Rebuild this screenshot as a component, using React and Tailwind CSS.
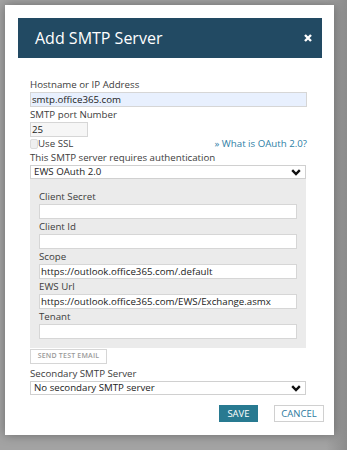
const Chevron = () => (
  <svg width="10" height="7" viewBox="0 0 10 7" className="mr-[4px]">
    <polyline points="1.2,1.2 5,5 8.8,1.2" fill="none" stroke="#111" strokeWidth="2.4" />
  </svg>
);

const Label = ({ children }) => (
  <div className="h-[15px] leading-[15px] text-[9.7px] text-[#3c3c3c]">{children}</div>
);

const TextInput = ({ value, className = 'bg-white' }) => (
  <div className={`h-[15px] border border-[#d6d6d6] px-[1px] text-[9.7px] leading-[13px] text-[#222] ${className}`}>
    {value}
  </div>
);

const Select = ({ value }) => (
  <div className="flex h-[14px] w-[276px] items-center justify-between border border-[#d0d0d0] bg-white pl-[3px] text-[9.7px] text-[#222]">
    <span className="leading-[12px]">{value}</span>
    <Chevron />
  </div>
);

const oauthFields = [
  { label: 'Client Secret', value: '' },
  { label: 'Client Id', value: '' },
  { label: 'Scope', value: 'https://outlook.office365.com/.default' },
  { label: 'EWS Url', value: 'https://outlook.office365.com/EWS/Exchange.asmx' },
  { label: 'Tenant', value: '' },
];

export default function App() {
  return (
    <div className="h-[450px] w-[347px] bg-[linear-gradient(to_right,#a3a3a3_0%,#a3a3a3_94%,#8c8c8c_100%)] p-[5px] font-['Open_Sans',sans-serif]">
      <div className="h-[430px] w-[329px] bg-white pl-[13px] pt-[13px] shadow-[0_0_10px_rgba(0,0,0,0.35)]">
        <div className="flex h-[40px] w-[304px] items-center justify-between bg-[#224a63] pl-[17px] pr-[10px]">
          <h1 className="text-[16px] leading-none text-white">Add SMTP Server</h1>
          <svg width="8" height="8" viewBox="0 0 8 8">
            <path d="M1 1 L7 7 M7 1 L1 7" stroke="#fff" strokeWidth="2.4" />
          </svg>
        </div>

        <div className="w-[277px] pl-[12px] pt-[19px] box-content">
          <Label>Hostname or IP Address</Label>
          <TextInput value="smtp.office365.com" className="w-[277px] bg-[#e8f0fe]" />
          <Label>SMTP port Number</Label>
          <TextInput value="25" className="w-[58px] bg-[#f6f6f6]" />
          <div className="flex h-[13px] items-center justify-between text-[9.7px]">
            <div className="flex items-center">
              <span className="h-[10px] w-[8px] rounded-[2px] border border-[#dcdcdc] bg-[#efefef]" />
              <span className="leading-[13px] text-[#3c3c3c]">Use SSL</span>
            </div>
            <span className="leading-[13px] text-[#2d7ea6]">» What is OAuth 2.0?</span>
          </div>
          <Label>This SMTP server requires authentication</Label>
          <Select value="EWS OAuth 2.0" />

          <div className="w-[276px] bg-[#ebebeb] px-[9px] pb-[9px] pt-[10px]">
            {oauthFields.map((f) => (
              <div key={f.label}>
                <Label>{f.label}</Label>
                <TextInput value={f.value} className="w-[258px] bg-white" />
              </div>
            ))}
          </div>

          <div className="mt-[1px] flex h-[15px] w-[77px] items-center justify-center border border-[#d6d6d6] text-[7px] font-semibold tracking-[0.2px] text-[#9a9a9a]">
            SEND TEST EMAIL
          </div>

          <div className="mt-[2px]">
            <Label>Secondary SMTP Server</Label>
          </div>
          <Select value="No secondary SMTP server" />

          <div className="mt-[10px] flex justify-end gap-[16px] mr-[-17px]">
            <button className="h-[17px] w-[39px] bg-[#287a91] text-[9.5px] leading-none text-white">SAVE</button>
            <button className="h-[17px] w-[50px] border border-[#d0d0d0] bg-white text-[9.5px] leading-none text-[#2b7aa0]">CANCEL</button>
          </div>
        </div>
      </div>
    </div>
  );
}
